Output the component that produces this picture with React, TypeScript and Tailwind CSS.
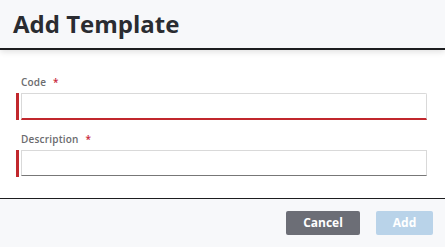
export default function App() {
  return (
    <div className="flex h-[247px] w-[445px] flex-col bg-white font-['Open_Sans',sans-serif]">
      {/* Header */}
      <div className="relative z-10 flex h-[50px] shrink-0 items-center border-b-2 border-[#1d1d1f] bg-[#f7f8fa] px-[13px] shadow-[0_2px_6px_rgba(0,0,0,0.12)]">
        <h1 className="text-[24px] font-bold leading-none text-[#2a2c31]">Add Template</h1>
      </div>

      {/* Body */}
      <div className="flex flex-1 flex-col gap-[12px] pl-[16px] pr-[18px] pt-[25px]">
        <div className="flex flex-col">
          <label className="mb-[4px] pl-[5px] text-[10px] font-semibold leading-[14px] tracking-[0.2px] text-[#6b6b6e]">
            Code <span className="ml-[4px] text-[#c8283a]">*</span>
          </label>
          <div className="flex h-[27px]">
            <div className="w-[3px] bg-[#c1272d]" />
            <input className="ml-[2px] flex-1 rounded-tr-[2px] border border-b-2 border-[#d9d9d9] border-b-[#c1272d] bg-white outline-none" />
          </div>
        </div>
        <div className="flex flex-col">
          <label className="mb-[4px] pl-[5px] text-[10px] font-semibold leading-[14px] tracking-[0.2px] text-[#6b6b6e]">
            Description <span className="ml-[4px] text-[#c8283a]">*</span>
          </label>
          <div className="flex h-[27px]">
            <div className="w-[3px] bg-[#c1272d]" />
            <input className="ml-[2px] mb-[1px] flex-1 border border-[#d9d9d9] border-b-[#777777] bg-white outline-none" />
          </div>
        </div>
      </div>

      {/* Footer */}
      <div className="flex h-[49px] shrink-0 items-center justify-end gap-[16px] border-t border-[#1d1d1f] bg-[#f7f8fa] pr-[12px]">
        <button className="h-[24px] w-[74px] rounded-[2px] bg-[#6c6e76] text-[12px] font-bold text-white">
          Cancel
        </button>
        <button className="h-[24px] w-[57px] rounded-[2px] bg-[#b9d3e9] text-[12px] font-bold text-white">
          Add
        </button>
      </div>
    </div>
  );
}
